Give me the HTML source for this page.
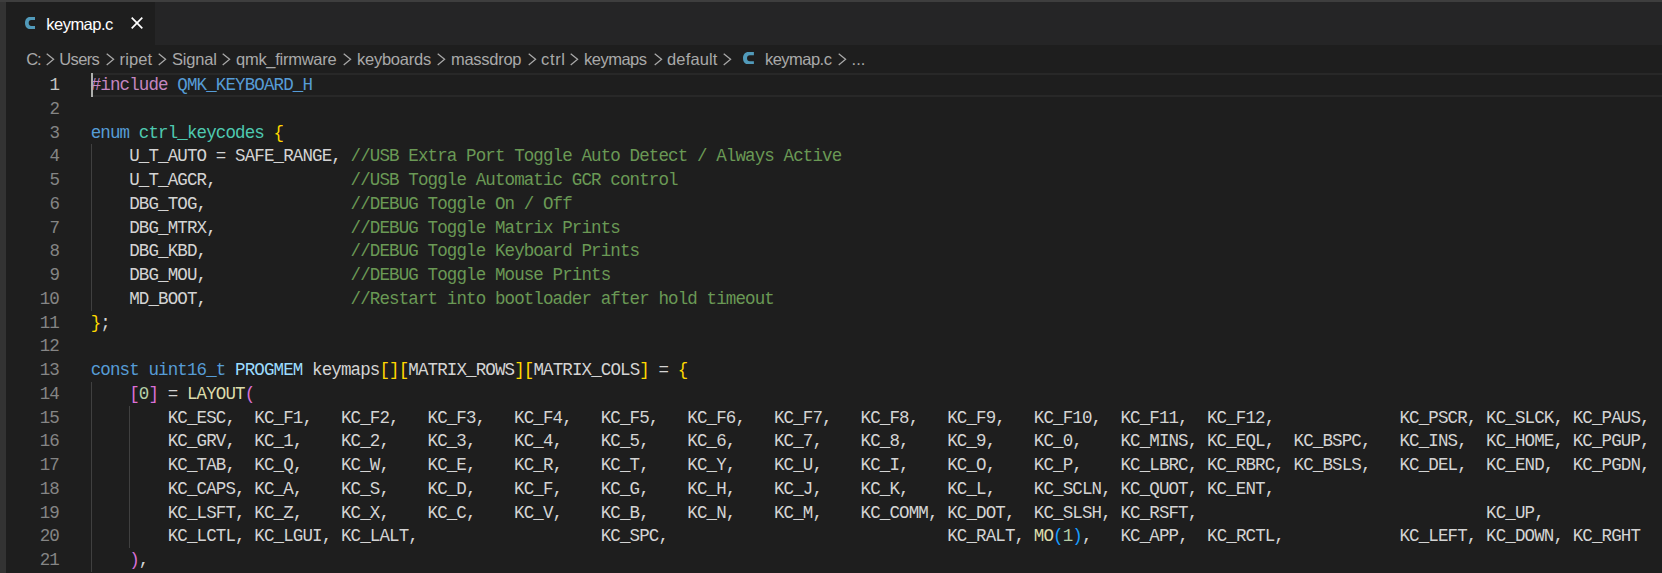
<!DOCTYPE html>
<html><head><meta charset="utf-8"><style>
html,body{margin:0;padding:0;}
body{width:1662px;height:573px;overflow:hidden;background:#1e1e1e;position:relative;font-family:"Liberation Sans",sans-serif;}
#top{position:absolute;left:0;top:0;width:1662px;height:2px;background:#3e3e3e;}
#left{position:absolute;left:0;top:2px;width:6px;height:571px;background:#333333;}
#tabbar{position:absolute;left:6px;top:2px;width:1656px;height:43px;background:#252526;}
#tab{position:absolute;left:6px;top:2px;width:149px;height:43px;background:#1e1e1e;}
.tabtxt{position:absolute;left:40.3px;top:12px;font-size:16.5px;color:#ffffff;line-height:20px;letter-spacing:-0.53px}
.cicon{position:absolute;font-weight:bold;color:#519aba;line-height:16px;font-family:"Liberation Sans",sans-serif;}
.bc{position:absolute;top:49px;font-size:16.5px;line-height:20px;color:#a9a9a9;white-space:pre;}
.chev{position:absolute;top:52.5px;}
.ln{position:absolute;left:0;width:59px;text-align:right;font-family:"Liberation Mono",monospace;font-size:17.5px;line-height:23.75px;height:23.75px;color:#858585;letter-spacing:-0.8784px}
.cl{position:absolute;left:90.7px;font-family:"Liberation Mono",monospace;font-size:17.5px;line-height:23.75px;height:23.75px;color:#d4d4d4;white-space:pre;letter-spacing:-0.8784px}
.ig{position:absolute;width:1px;background:#404040;}
#curline{position:absolute;left:91px;top:73px;width:1571px;height:20px;border-top:2px solid #282828;border-bottom:2px solid #282828;}
#cursor{position:absolute;left:91px;top:73px;width:2px;height:24px;background:#aeafad;}
</style></head><body>
<div id="top"></div>
<div id="left"></div>
<div id="tabbar"></div>
<div id="tab">
<svg style="position:absolute;left:19.3px;top:15px" width="10" height="12" viewBox="0 0 10 12"><path d="M10 0 H5 C1.8 0 0 2.6 0 6 C0 9.4 1.8 12 5 12 H10 V8.9 H6.3 C4.6 8.9 3.7 7.7 3.7 6 C3.7 4.3 4.6 3.1 6.3 3.1 H10 Z" fill="#519aba"/></svg>
<div class="tabtxt">keymap.c</div>
<svg style="position:absolute;left:125.3px;top:15px" width="12" height="12" viewBox="0 0 12 12"><path d="M0.7 0.7 L11.3 11.3 M11.3 0.7 L0.7 11.3" stroke="#ffffff" stroke-width="1.7"/></svg>
</div>
<div class="bc" style="left:26.3px;letter-spacing:-1.2px">C:</div><div class="bc" style="left:59.3px;letter-spacing:-0.65px">Users</div><div class="bc" style="left:119.6px;letter-spacing:0.1px">ripet</div><div class="bc" style="left:172px;letter-spacing:-0.2px">Signal</div><div class="bc" style="left:236px;letter-spacing:-0.27px">qmk_firmware</div><div class="bc" style="left:357px;letter-spacing:-0.25px">keyboards</div><div class="bc" style="left:451px;letter-spacing:-0.28px">massdrop</div><div class="bc" style="left:541px;letter-spacing:0.66px">ctrl</div><div class="bc" style="left:584px;letter-spacing:-0.5px">keymaps</div><div class="bc" style="left:667px;letter-spacing:0.15px">default</div><div class="bc" style="left:765px;letter-spacing:-0.53px">keymap.c</div><div class="bc" style="left:851.6px;letter-spacing:0px">...</div><svg class="chev" style="left:46.0px" width="9" height="13" viewBox="0 0 9 13"><path d="M0.7 0.7 L7.6 6.3 L0.7 11.9" fill="none" stroke="#a9a9a9" stroke-width="1.25"/></svg><svg class="chev" style="left:105.7px" width="9" height="13" viewBox="0 0 9 13"><path d="M0.7 0.7 L7.6 6.3 L0.7 11.9" fill="none" stroke="#a9a9a9" stroke-width="1.25"/></svg><svg class="chev" style="left:158.3px" width="9" height="13" viewBox="0 0 9 13"><path d="M0.7 0.7 L7.6 6.3 L0.7 11.9" fill="none" stroke="#a9a9a9" stroke-width="1.25"/></svg><svg class="chev" style="left:222.1px" width="9" height="13" viewBox="0 0 9 13"><path d="M0.7 0.7 L7.6 6.3 L0.7 11.9" fill="none" stroke="#a9a9a9" stroke-width="1.25"/></svg><svg class="chev" style="left:343.2px" width="9" height="13" viewBox="0 0 9 13"><path d="M0.7 0.7 L7.6 6.3 L0.7 11.9" fill="none" stroke="#a9a9a9" stroke-width="1.25"/></svg><svg class="chev" style="left:437.2px" width="9" height="13" viewBox="0 0 9 13"><path d="M0.7 0.7 L7.6 6.3 L0.7 11.9" fill="none" stroke="#a9a9a9" stroke-width="1.25"/></svg><svg class="chev" style="left:528.0px" width="9" height="13" viewBox="0 0 9 13"><path d="M0.7 0.7 L7.6 6.3 L0.7 11.9" fill="none" stroke="#a9a9a9" stroke-width="1.25"/></svg><svg class="chev" style="left:570.0px" width="9" height="13" viewBox="0 0 9 13"><path d="M0.7 0.7 L7.6 6.3 L0.7 11.9" fill="none" stroke="#a9a9a9" stroke-width="1.25"/></svg><svg class="chev" style="left:653.7px" width="9" height="13" viewBox="0 0 9 13"><path d="M0.7 0.7 L7.6 6.3 L0.7 11.9" fill="none" stroke="#a9a9a9" stroke-width="1.25"/></svg><svg class="chev" style="left:723.0px" width="9" height="13" viewBox="0 0 9 13"><path d="M0.7 0.7 L7.6 6.3 L0.7 11.9" fill="none" stroke="#a9a9a9" stroke-width="1.25"/></svg><svg class="chev" style="left:837.8px" width="9" height="13" viewBox="0 0 9 13"><path d="M0.7 0.7 L7.6 6.3 L0.7 11.9" fill="none" stroke="#a9a9a9" stroke-width="1.25"/></svg><svg style="position:absolute;left:743.3px;top:51.6px" width="10.9" height="12.5" viewBox="0 0 10 12" preserveAspectRatio="none"><path d="M10 0 H5 C1.8 0 0 2.6 0 6 C0 9.4 1.8 12 5 12 H10 V8.9 H6.3 C4.6 8.9 3.7 7.7 3.7 6 C3.7 4.3 4.6 3.1 6.3 3.1 H10 Z" fill="#519aba"/></svg>
<div id="curline"></div>
<div class="ig" style="left:90.70px;top:144.25px;height:166.25px"></div><div class="ig" style="left:90.70px;top:381.75px;height:190.00px"></div><div class="ig" style="left:129.19px;top:405.50px;height:142.50px"></div>
<div class="ln" style="top:74.00px;color:#c6c6c6">1</div><div class="cl" style="top:74.00px"><span style="color:#c586c0">#include</span> <span style="color:#569cd6">QMK_KEYBOARD_H</span></div><div class="ln" style="top:97.75px">2</div><div class="ln" style="top:121.50px">3</div><div class="cl" style="top:121.50px"><span style="color:#569cd6">enum</span> <span style="color:#4ec9b0">ctrl_keycodes</span> <span style="color:#ffd700">{</span></div><div class="ln" style="top:145.25px">4</div><div class="cl" style="top:145.25px">    U_T_AUTO = SAFE_RANGE, <span style="color:#6a9955">//USB Extra Port Toggle Auto Detect / Always Active</span></div><div class="ln" style="top:169.00px">5</div><div class="cl" style="top:169.00px">    U_T_AGCR,              <span style="color:#6a9955">//USB Toggle Automatic GCR control</span></div><div class="ln" style="top:192.75px">6</div><div class="cl" style="top:192.75px">    DBG_TOG,               <span style="color:#6a9955">//DEBUG Toggle On / Off</span></div><div class="ln" style="top:216.50px">7</div><div class="cl" style="top:216.50px">    DBG_MTRX,              <span style="color:#6a9955">//DEBUG Toggle Matrix Prints</span></div><div class="ln" style="top:240.25px">8</div><div class="cl" style="top:240.25px">    DBG_KBD,               <span style="color:#6a9955">//DEBUG Toggle Keyboard Prints</span></div><div class="ln" style="top:264.00px">9</div><div class="cl" style="top:264.00px">    DBG_MOU,               <span style="color:#6a9955">//DEBUG Toggle Mouse Prints</span></div><div class="ln" style="top:287.75px">10</div><div class="cl" style="top:287.75px">    MD_BOOT,               <span style="color:#6a9955">//Restart into bootloader after hold timeout</span></div><div class="ln" style="top:311.50px">11</div><div class="cl" style="top:311.50px"><span style="color:#ffd700">}</span>;</div><div class="ln" style="top:335.25px">12</div><div class="ln" style="top:359.00px">13</div><div class="cl" style="top:359.00px"><span style="color:#569cd6">const</span> <span style="color:#569cd6">uint16_t</span> <span style="color:#9cdcfe">PROGMEM</span> keymaps<span style="color:#ffd700">[]</span><span style="color:#ffd700">[</span>MATRIX_ROWS<span style="color:#ffd700">]</span><span style="color:#ffd700">[</span>MATRIX_COLS<span style="color:#ffd700">]</span> = <span style="color:#ffd700">{</span></div><div class="ln" style="top:382.75px">14</div><div class="cl" style="top:382.75px">    <span style="color:#da70d6">[</span><span style="color:#b5cea8">0</span><span style="color:#da70d6">]</span> = <span style="color:#dcdcaa">LAYOUT</span><span style="color:#da70d6">(</span></div><div class="ln" style="top:406.50px">15</div><div class="cl" style="top:406.50px">        KC_ESC,  KC_F1,   KC_F2,   KC_F3,   KC_F4,   KC_F5,   KC_F6,   KC_F7,   KC_F8,   KC_F9,   KC_F10,  KC_F11,  KC_F12,             KC_PSCR, KC_SLCK, KC_PAUS,</div><div class="ln" style="top:430.25px">16</div><div class="cl" style="top:430.25px">        KC_GRV,  KC_1,    KC_2,    KC_3,    KC_4,    KC_5,    KC_6,    KC_7,    KC_8,    KC_9,    KC_0,    KC_MINS, KC_EQL,  KC_BSPC,   KC_INS,  KC_HOME, KC_PGUP,</div><div class="ln" style="top:454.00px">17</div><div class="cl" style="top:454.00px">        KC_TAB,  KC_Q,    KC_W,    KC_E,    KC_R,    KC_T,    KC_Y,    KC_U,    KC_I,    KC_O,    KC_P,    KC_LBRC, KC_RBRC, KC_BSLS,   KC_DEL,  KC_END,  KC_PGDN,</div><div class="ln" style="top:477.75px">18</div><div class="cl" style="top:477.75px">        KC_CAPS, KC_A,    KC_S,    KC_D,    KC_F,    KC_G,    KC_H,    KC_J,    KC_K,    KC_L,    KC_SCLN, KC_QUOT, KC_ENT,</div><div class="ln" style="top:501.50px">19</div><div class="cl" style="top:501.50px">        KC_LSFT, KC_Z,    KC_X,    KC_C,    KC_V,    KC_B,    KC_N,    KC_M,    KC_COMM, KC_DOT,  KC_SLSH, KC_RSFT,                              KC_UP,</div><div class="ln" style="top:525.25px">20</div><div class="cl" style="top:525.25px">        KC_LCTL, KC_LGUI, KC_LALT,                   KC_SPC,                             KC_RALT, <span style="color:#dcdcaa">MO</span><span style="color:#179fff">(</span><span style="color:#b5cea8">1</span><span style="color:#179fff">)</span>,   KC_APP,  KC_RCTL,            KC_LEFT, KC_DOWN, KC_RGHT</div><div class="ln" style="top:549.00px">21</div><div class="cl" style="top:549.00px">    <span style="color:#da70d6">)</span>,</div>
<div id="cursor"></div>
</body></html>
